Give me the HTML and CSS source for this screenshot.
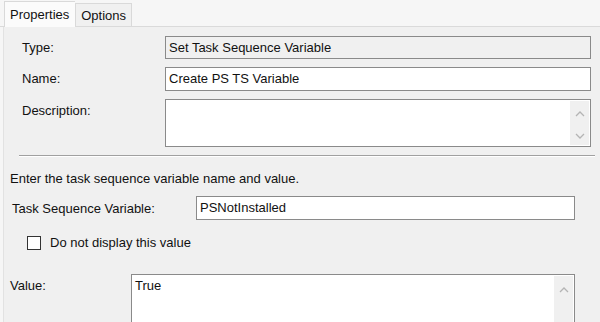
FILE: index.html
```html
<!DOCTYPE html>
<html>
<head>
<meta charset="utf-8">
<link rel="stylesheet" href="styles.css">
</head>
<body>
<div class="window">
  <div class="tabs">
    <div class="tab active">Properties</div>
    <div class="tab">Options</div>
  </div>
  <div class="panel">
    <div class="general">
      <div class="label">Type:</div>
      <div class="field readonly">Set Task Sequence Variable</div>
      <div class="label">Name:</div>
      <div class="field">Create PS TS Variable</div>
      <div class="label">Description:</div>
      <div class="field area">
        <div class="area-text"></div>
        <div class="scroll">
          <svg width="20" height="46" viewBox="0 0 20 46"><path d="M6 15 L10 11 L14 15" fill="none" stroke="#b4b4b4" stroke-width="1.3"/><path d="M6 33 L10 37 L14 33" fill="none" stroke="#b4b4b4" stroke-width="1.3"/></svg>
        </div>
      </div>
    </div>
    <div class="separator"></div>
    <div class="intro">Enter the task sequence variable name and value.</div>
    <div class="var-row">
      <div class="var-label">Task Sequence Variable:</div>
      <div class="field var-field">PSNotInstalled</div>
    </div>
    <div class="check-row">
      <span class="checkbox"></span>
      <span>Do not display this value</span>
    </div>
    <div class="value-row">
      <div class="value-label">Value:</div>
      <div class="field value-field">
        <div class="area-text">True</div>
        <div class="scroll">
          <svg width="20" height="30" viewBox="0 0 20 30"><path d="M6 16 L10 12 L14 16" fill="none" stroke="#b4b4b4" stroke-width="1.3"/></svg>
        </div>
      </div>
    </div>
  </div>
</div>
</body>
</html>
```

FILE: styles.css
```css
* { box-sizing: border-box; }
html, body {
  margin: 0;
  padding: 0;
  width: 600px;
  height: 322px;
  overflow: hidden;
  background: #f6f6f6;
  font-family: "Liberation Sans", Arial, sans-serif;
  font-size: 13px;
  color: #111;
}
.window {
  display: flex;
  flex-direction: column;
  height: 322px;
  overflow: hidden;
}
.tabs {
  display: flex;
  align-items: flex-end;
  padding-left: 4px;
  height: 27px;
  border-bottom: 1px solid #dadada;
}
.tab {
  height: 23px;
  padding: 0 5px;
  display: flex;
  align-items: center;
  border: 1px solid #d9d9d9;
  border-bottom: none;
  background: #f0f0f0;
}
.tab.active {
  height: 26px;
  background: #fbfbfb;
  margin-bottom: -1px;
  padding: 0 6px 0 5px;
  border-right: none;
  position: relative;
  z-index: 1;
}
.panel {
  flex: 1;
  min-height: 0;
  overflow: hidden;
  background: #f0f0f0;
  margin-left: 3px;
  border-left: 1px solid #e2e2e2;
  display: flex;
  flex-direction: column;
  padding-top: 9px;
}
.general {
  display: grid;
  grid-template-columns: 143px 426px;
  grid-template-rows: 23px 24px 48px;
  row-gap: 8px;
  padding-left: 18px;
}
.label {
  padding-top: 4px;
}
.field {
  border: 1px solid #8a8a8a;
  background: #fff;
  padding: 3px 0 0 3px;
  white-space: nowrap;
}
.field.readonly {
  background: #f0f0f0;
}
.area {
  display: flex;
  padding: 0;
}
.area-text {
  flex: 1;
  padding: 3px 0 0 3px;
}
.scroll {
  width: 20px;
  background: #f0f0f0;
  border: 1px solid #fff;
  border-left: none;
}
.scroll svg { display: block; }
.separator {
  margin: 8px 5px 0 15px;
  height: 2px;
  border-top: 1px solid #a0a0a0;
  border-bottom: 1px solid #fff;
}
.intro {
  margin: 14px 0 0 6px;
}
.var-row {
  display: flex;
  align-items: center;
  margin-top: 10px;
  padding-left: 8px;
}
.var-label {
  width: 184px;
}
.var-field {
  width: 379px;
  height: 24px;
}
.check-row {
  display: flex;
  align-items: center;
  gap: 9px;
  margin-top: 15px;
  padding-left: 23px;
}
.checkbox {
  flex: none;
  width: 14px;
  height: 14px;
  border: 1px solid #333;
  background: #fff;
}
.value-row {
  display: flex;
  flex: none;
  margin-top: 24px;
  padding-left: 6px;
}
.value-label {
  width: 121px;
  padding-top: 4px;
}
.value-field {
  width: 444px;
  height: 60px;
  display: flex;
  padding: 0;
}
```
